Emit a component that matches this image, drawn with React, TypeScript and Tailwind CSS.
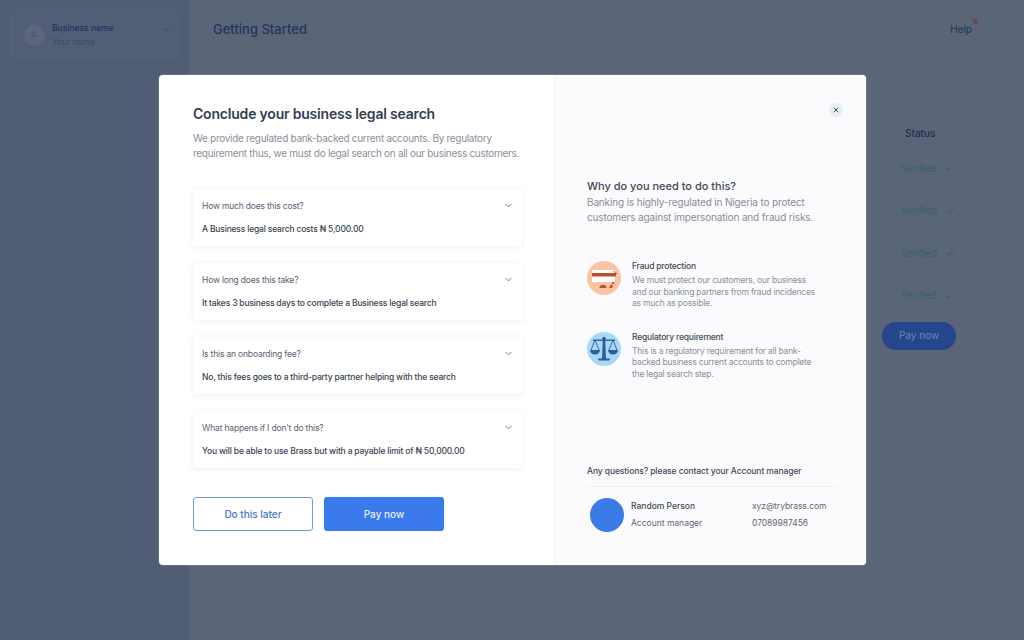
import { Check, ChevronDown, X } from 'lucide-react';

const faqs = [
  { q: 'How much does this cost?', a: 'A Business legal search costs ₦ 5,000.00' },
  { q: 'How long does this take?', a: 'It takes 3 business days to complete a Business legal search' },
  { q: 'Is this an onboarding fee?', a: 'No, this fees goes to a third-party partner helping with the search' },
  { q: "What happens if I don't do this?", a: 'You will be able to use Brass but with a payable limit of ₦ 50,000.00' },
];

const FraudIcon = () => (
  <svg viewBox="0 0 34 34" className="w-[34px] h-[34px] shrink-0">
    <circle cx="17" cy="17" r="17" fill="#fbc4a4" />
    <rect x="5" y="9" width="23" height="12" fill="#fff" />
    <rect x="5" y="12" width="24" height="3.5" fill="#b5532a" />
    <path d="M26 10l4 3M26 15l4-3" stroke="#b5532a" strokeWidth="0.8" />
    <path d="M12 27l2-3h4l2 3z" fill="#b5532a" />
    <path d="M22 27l2-4 2 2-1 2z" fill="#c9542c" />
    <circle cx="26" cy="22" r="1.2" fill="#c9542c" />
  </svg>
);

const ScaleIcon = () => (
  <svg viewBox="0 0 34 34" className="w-[34px] h-[34px] shrink-0">
    <circle cx="17" cy="17" r="17" fill="#a9d8f7" />
    <path d="M15.8 7h2.4l.8 20h-4z" fill="#2b5f9e" />
    <rect x="11" y="26.5" width="12" height="2" rx="1" fill="#2b5f9e" />
    <rect x="6" y="7.5" width="22" height="1.4" fill="#2b5f9e" />
    <circle cx="17" cy="6.5" r="1.8" fill="#2b5f9e" />
    <path d="M8 8l-4 10M8 8l4 10M26 8l-4 10M26 8l4 10" stroke="#2b5f9e" strokeWidth="0.9" fill="none" />
    <path d="M3 18h10a5 4.5 0 0 1-10 0zM21 18h10a5 4.5 0 0 1-10 0z" fill="#2b5f9e" />
  </svg>
);

export default function App() {
  return (
    <div className="relative w-[1024px] h-[640px] overflow-hidden flex bg-[#5a6578] text-[#334155] font-['Inter',sans-serif]">
      {/* dimmed page behind the modal */}
      <aside className="w-[190px] shrink-0 bg-[#505d75] pt-[12px] px-[11px]">
        <div className="h-[46px] border border-[#566277] flex items-center pl-[12px] pr-[7px] gap-[7px] bg-[#525e75]">
          <div className="w-[21px] h-[21px] rounded-full bg-[#5c677a] flex items-center justify-center text-[7px] text-[#3b4a66]">IL</div>
          <div className="flex-1 leading-none">
            <div className="text-[8.5px] font-medium text-[#22345c]">Business name</div>
            <div className="text-[8.5px] text-[#3c4a65] mt-[5px]">Your name</div>
          </div>
          <ChevronDown className="w-[10px] h-[10px] text-[#2f3f5f] -mt-[11px]" />
        </div>
      </aside>
      <main className="flex-1 min-w-0 flex flex-col">
        <header className="h-[59px] flex items-center justify-between pl-[23px] pr-[52px]">
          <h1 className="text-[13px] font-medium text-[#22345c]">Getting Started</h1>
          <div className="relative text-[10px] text-[#22345c]">
            Help
            <span className="absolute -top-[3px] -right-[6px] w-[5px] h-[5px] rounded-full bg-[#7a3f55]" />
          </div>
        </header>
        <div className="ml-auto mr-[18px] mt-[56px] w-[130px] h-[293px] border-r border-b border-[#5d687b] flex flex-col items-start pl-[6px]">
          <div className="text-[10px] font-medium text-[#1f2e52] ml-[23px] mt-[12px] leading-[12px]">Status</div>
          <div className="mt-[23px] flex flex-col gap-[30.5px] ml-[19px]">
            {[0, 1, 2, 3].map((i) => (
              <div key={i} className="flex items-center gap-[8px] h-[12px] text-[10px] tracking-[-0.1px] text-[#3a5f6c]">
                Verified <Check className="w-[10px] h-[10px] text-[#2c5563]" />
              </div>
            ))}
          </div>
          <div className="mt-[20px] w-[74px] h-[28px] rounded-full bg-[#25468c] flex items-center justify-center text-[10px] text-[#6f84ab]">Pay now</div>
        </div>
      </main>

      {/* modal */}
      <div className="absolute inset-0 flex items-start justify-start pl-[159px] pt-[75px]">
        <div className="w-[707px] h-[490px] bg-white rounded-[4px] overflow-hidden flex shadow-[0_0_2px_rgba(255,255,255,0.4)]">
          <section className="w-[395px] shrink-0 pl-[34px] pr-[32px] pt-[30px]">
            <h2 className="text-[14px] leading-[18px] tracking-[-0.2px] font-semibold text-[#343e51]">Conclude your business legal search</h2>
            <p className="mt-[8px] text-[10px] leading-[14.5px] tracking-[-0.3px] text-[#8a909c]">We provide regulated bank-backed current accounts. By regulatory requirement thus, we must do legal search on all our business customers.</p>
            <div className="mt-[29px] flex flex-col gap-[17px]">
              {faqs.map((f) => (
                <div key={f.q} className="h-[57px] rounded-[4px] bg-white shadow-[0_1px_6px_rgba(40,50,80,0.08)] pl-[9px] pr-[8px] pt-[10.5px] tracking-[-0.18px]">
                  <div className="flex items-center justify-between text-[8.5px] leading-[12px] text-[#5a6272]">
                    {f.q}
                    <ChevronDown className="w-[11px] h-[11px] text-[#6b7280]" />
                  </div>
                  <div className="mt-[11px] text-[8.5px] leading-[12px] font-medium text-[#3a4352]">{f.a}</div>
                </div>
              ))}
            </div>
            <div className="mt-[29px] flex gap-[11px]">
              <button className="w-[120px] h-[34px] rounded-[3px] border border-[#6f9bd8] text-[#4a78c8] text-[10px] font-medium">Do this later</button>
              <button className="w-[120px] h-[34px] rounded-[3px] bg-[#3a7aec] text-[#e8f0ff] text-[10px] font-medium">Pay now</button>
            </div>
          </section>
          <section className="flex-1 min-w-0 bg-[#fbfbfe] border-l border-[#f3f4f7] flex flex-col pl-[32px] pr-[29px]">
            <div className="self-end mt-[28px] -mr-[6px] w-[14px] h-[14px] rounded-full bg-[#e8eef1] flex items-center justify-center">
              <X className="w-[8px] h-[8px] text-[#3f5560]" strokeWidth={3} />
            </div>
            <h3 className="mt-[62px] text-[11px] leading-[14px] font-medium text-[#3f4858]">Why do you need to do this?</h3>
            <p className="mt-[2px] text-[10px] leading-[15px] tracking-[-0.15px] text-[#878d99]">Banking is highly-regulated in Nigeria to protect customers against impersonation and fraud risks.</p>
            <div className="mt-[36px] flex flex-col gap-[22px]">
              <div className="flex gap-[11px] items-start">
                <FraudIcon />
                <div className="min-w-0 max-w-[186px] tracking-[-0.2px]">
                  <div className="text-[8.5px] leading-[11px] font-medium text-[#3f4858]">Fraud protection</div>
                  <p className="mt-[3px] text-[8.5px] leading-[11.5px] text-[#8a909c]">We must protect our customers, our business and our banking partners from fraud incidences as much as possible.</p>
                </div>
              </div>
              <div className="flex gap-[11px] items-start">
                <ScaleIcon />
                <div className="min-w-0 max-w-[186px] tracking-[-0.2px]">
                  <div className="text-[8.5px] leading-[11px] font-medium text-[#3f4858]">Regulatory requirement</div>
                  <p className="mt-[3px] text-[8.5px] leading-[11.5px] text-[#8a909c]">This is a regulatory requirement for all bank-backed business current accounts to complete the legal search step.</p>
                </div>
              </div>
            </div>
            <div className="mt-auto pb-[33px]">
              <div className="text-[8.5px] leading-[12px] tracking-[-0.1px] font-medium text-[#3f4858] pb-[9px] border-b border-[#f0f1f5]">Any questions? please contact your Account manager</div>
              <div className="mt-[11px] flex items-center pl-[3px]">
                <div className="w-[34px] h-[34px] rounded-full bg-[#3b7be8] shrink-0" />
                <div className="ml-[7px] w-[121px] text-[8.5px] leading-[17px]">
                  <div className="font-medium text-[#3f4858]">Random Person</div>
                  <div className="text-[#5f6673]">Account manager</div>
                </div>
                <div className="text-[8.5px] leading-[17px] tracking-[-0.05px] text-[#5f6673]">
                  <div>xyz@trybrass.com</div>
                  <div>07089987456</div>
                </div>
              </div>
            </div>
          </section>
        </div>
      </div>
    </div>
  );
}
